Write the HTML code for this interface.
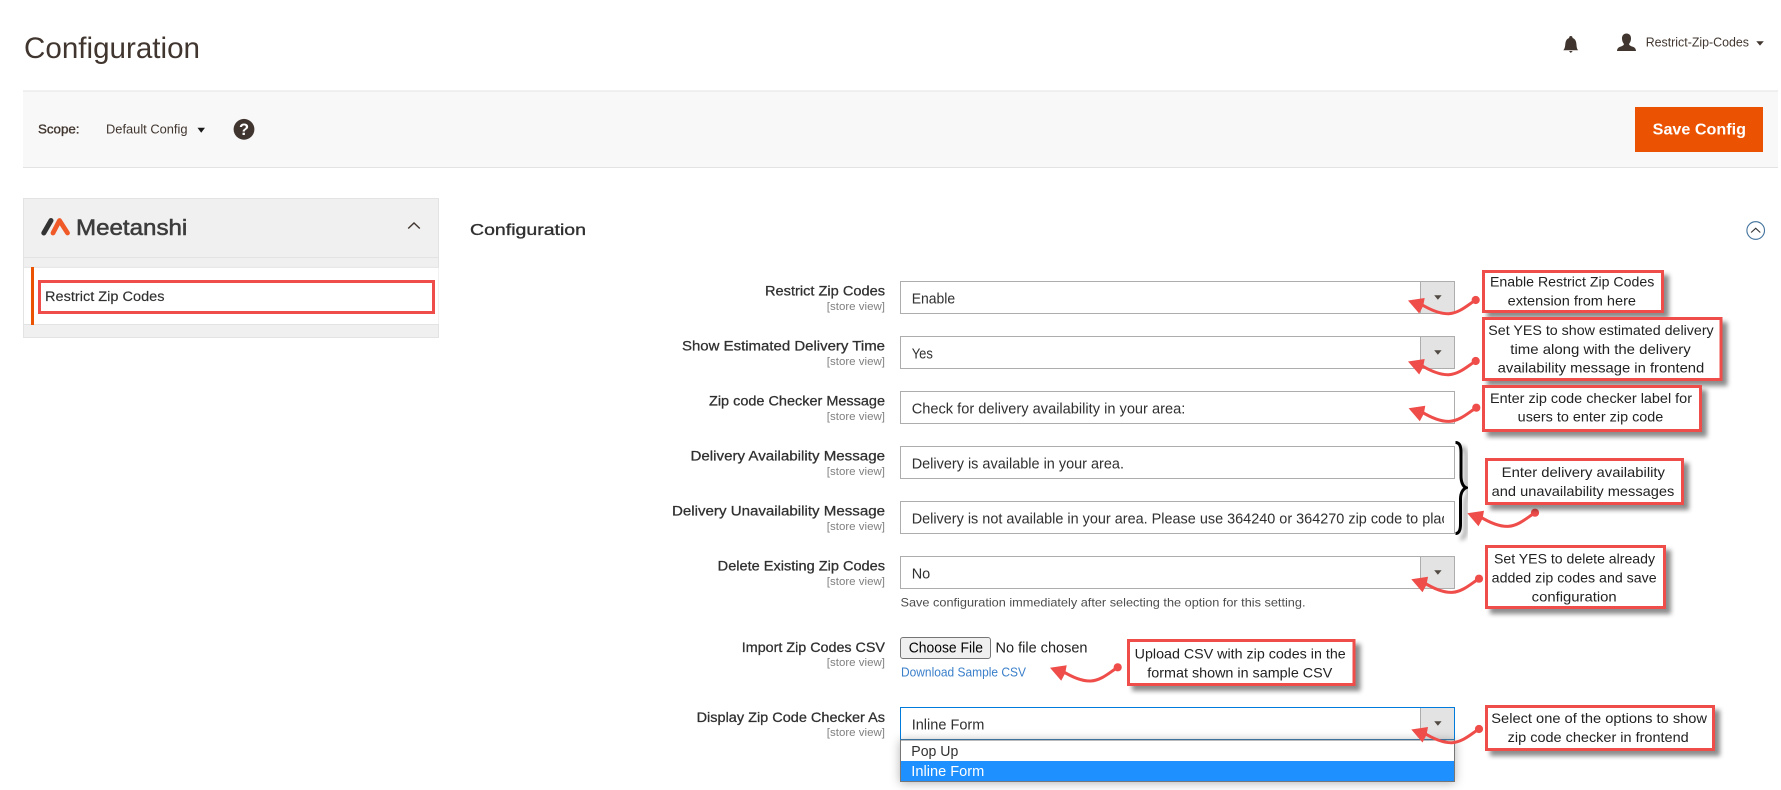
<!DOCTYPE html>
<html lang="en">
<head>
<meta charset="utf-8">
<title>Configuration</title>
<style>
html,body{margin:0;padding:0;background:#fff;width:1781px;height:790px;overflow:hidden}
svg{display:block}
text{font-family:"Liberation Sans",Arial,sans-serif;white-space:pre}
.lb{font-size:14.2px;fill:#303030;stroke:#303030;stroke-width:.28px}
.sv{font-size:10.6px;fill:#808080}
.in{font-size:14.6px;fill:#303030}
.fld{fill:#fff;stroke:#adadad;stroke-width:1}
.btn{fill:#e3e3e3;stroke:#adadad;stroke-width:1}
.tri{fill:#514943}
.co{fill:#fff;stroke:#ef4d4a;stroke-width:3}
.ct{font-size:14px;fill:#222}
.ar{fill:none;stroke:#ef4d4a;stroke-width:3;stroke-linecap:round}
</style>
</head>
<body>
<svg xmlns="http://www.w3.org/2000/svg" width="1781" height="790" viewBox="0 0 1781 790">
<defs>
<filter id="sh" x="-10%" y="-15%" width="125%" height="140%"><feDropShadow dx="5" dy="5" stdDeviation="2.5" flood-color="#000" flood-opacity=".45"/></filter>
<filter id="sd" x="-5%" y="-30%" width="110%" height="170%"><feDropShadow dx="0" dy="1" stdDeviation="5" flood-color="#000" flood-opacity=".3"/></filter>
<clipPath id="clip"><rect x="905" y="500" width="539" height="34"/></clipPath>
<g id="a">
<path class="ar" d="M-55,4 C-46,9.5 -36,14 -27,13.7 C-16,13 -8,5 0,0"/>
<path fill="#ef4d4a" d="M-67.7,0.5 L-51,-2 L-52.5,6 L-56.5,13.5 Z"/>
<circle cx="0" cy="0" r="4.1" fill="#ef4d4a"/>
</g>
</defs>

<!-- Page header -->
<text x="24" y="58" font-size="30" fill="#41362f" textLength="176" lengthAdjust="spacingAndGlyphs">Configuration</text>
<path fill="#41362f" d="M1570.8,36 C1569.6,36 1569.1,37 1569.1,38 C1566,39 1565.5,42 1565.2,45 C1565,48 1564,49.5 1563.3,50.3 L1578.3,50.3 C1577.3,49.5 1576.7,48 1576.5,45 C1576.3,42 1575.7,39 1572.6,38 C1572.6,37 1572.1,36 1570.8,36 Z M1569,51 L1572.7,51 L1570.8,53 Z"/>
<path fill="#41362f" d="M1626.5,33.5 C1623.2,33.5 1621.8,36 1622,39 C1622.2,41.5 1623.2,43 1624,44 C1623.7,45.5 1622.2,46 1620.2,46.8 C1618.2,47.6 1617.2,48.5 1617,51 L1636,51 C1635.8,48.5 1634.8,47.6 1632.8,46.8 C1630.8,46 1629.3,45.5 1629,44 C1629.8,43 1630.8,41.5 1631,39 C1631.2,36 1629.8,33.5 1626.5,33.5 Z"/>
<text x="1645.7" y="46.7" font-size="13.2" fill="#41362f" textLength="103.3" lengthAdjust="spacingAndGlyphs">Restrict-Zip-Codes</text>
<path fill="#41362f" d="M1756.3,41.2 H1763.8 L1760,45.6 Z"/>

<!-- Action bar -->
<rect x="23" y="91" width="1755" height="76.5" fill="#f8f8f8"/>
<rect x="23" y="90.5" width="1755" height="1" fill="#e3e3e3"/>
<rect x="23" y="167" width="1755" height="1" fill="#e3e3e3"/>
<text x="38" y="133.5" font-size="13.2" fill="#41362f" stroke="#41362f" stroke-width=".35" textLength="41.5" lengthAdjust="spacingAndGlyphs">Scope:</text>
<text x="106" y="133.5" font-size="13.2" fill="#41362f" textLength="81.5" lengthAdjust="spacingAndGlyphs">Default Config</text>
<path fill="#1a1a1a" d="M197.5,127.8 H205 L201.2,132.8 Z"/>
<circle cx="244" cy="129.3" r="10.4" fill="#41362f"/>
<text x="244" y="135.2" font-size="16.5" font-weight="700" fill="#fff" text-anchor="middle">?</text>
<rect x="1635" y="107" width="128" height="45" fill="#eb5202"/>
<text x="1652.7" y="134.4" font-size="16" font-weight="700" fill="#fff" textLength="93.3" lengthAdjust="spacingAndGlyphs">Save Config</text>

<!-- Sidebar -->
<rect x="23.5" y="198.5" width="415" height="139" fill="#f0f0f0" stroke="#e3e3e3"/>
<rect x="24" y="257" width="414" height="1" fill="#e3e3e3"/>
<rect x="24" y="267" width="414.5" height="58" fill="#fff"/>
<rect x="24" y="266.8" width="414.5" height="1" fill="#e3e3e3"/>
<rect x="24" y="324" width="414.5" height="1" fill="#e3e3e3"/>
<rect x="31" y="267" width="3" height="58" fill="#eb5202"/>
<path d="M43.8,233 L51,220.5" stroke="#333" stroke-width="5" stroke-linecap="round" fill="none"/>
<path d="M53,233 L59.5,220.5 L67.5,233" stroke="#f05a28" stroke-width="4.8" stroke-linecap="round" stroke-linejoin="round" fill="none"/>
<text x="76" y="235" font-size="22" fill="#3c3c3c" stroke="#3c3c3c" stroke-width=".55" textLength="111.3" lengthAdjust="spacingAndGlyphs">Meetanshi</text>
<path d="M408.2,228.5 L414,223 L419.8,228.5" fill="none" stroke="#41362f" stroke-width="1.4"/>
<rect x="39.5" y="281.5" width="394" height="31" fill="none" stroke="#ef4d4a" stroke-width="3"/>
<text x="45" y="301" font-size="14.2" fill="#303030" stroke="#303030" stroke-width=".15" textLength="119.5" lengthAdjust="spacingAndGlyphs">Restrict Zip Codes</text>

<!-- Section head -->
<text x="470" y="235" font-size="16" fill="#303030" stroke="#303030" stroke-width=".35" textLength="116" lengthAdjust="spacingAndGlyphs">Configuration</text>
<circle cx="1755.7" cy="230.5" r="8.8" fill="#fff" stroke="#41719c" stroke-width="1.1"/>
<path d="M1751.1,232.5 L1755.7,228.3 L1760.3,232.5" fill="none" stroke="#333" stroke-width="1.1"/>

<!-- Row 1 -->
<text class="lb" x="765" y="295.7" textLength="120" lengthAdjust="spacingAndGlyphs">Restrict Zip Codes</text>
<text class="sv" x="826.8" y="310" textLength="58.2" lengthAdjust="spacingAndGlyphs">[store view]</text>
<rect class="fld" x="900.5" y="281.5" width="554" height="32"/>
<rect class="btn" x="1420.5" y="281.5" width="34" height="32"/>
<path class="tri" d="M1434.2,295.3 H1441.6 L1437.9,299.7 Z"/>
<text class="in" x="911.7" y="303.3" textLength="43.5" lengthAdjust="spacingAndGlyphs">Enable</text>

<!-- Row 2 -->
<text class="lb" x="682" y="350.7" textLength="203" lengthAdjust="spacingAndGlyphs">Show Estimated Delivery Time</text>
<text class="sv" x="826.8" y="365" textLength="58.2" lengthAdjust="spacingAndGlyphs">[store view]</text>
<rect class="fld" x="900.5" y="336.5" width="554" height="32"/>
<rect class="btn" x="1420.5" y="336.5" width="34" height="32"/>
<path class="tri" d="M1434.2,350.3 H1441.6 L1437.9,354.7 Z"/>
<text class="in" x="911.7" y="358.3" textLength="21.2" lengthAdjust="spacingAndGlyphs">Yes</text>

<!-- Row 3 -->
<text class="lb" x="709" y="405.7" textLength="176" lengthAdjust="spacingAndGlyphs">Zip code Checker Message</text>
<text class="sv" x="826.8" y="420" textLength="58.2" lengthAdjust="spacingAndGlyphs">[store view]</text>
<rect class="fld" x="900.5" y="391.5" width="554" height="32"/>
<text class="in" x="911.7" y="413.3" textLength="273.6" lengthAdjust="spacingAndGlyphs">Check for delivery availability in your area:</text>

<!-- Row 4 -->
<text class="lb" x="690.5" y="460.7" textLength="194.5" lengthAdjust="spacingAndGlyphs">Delivery Availability Message</text>
<text class="sv" x="826.8" y="475" textLength="58.2" lengthAdjust="spacingAndGlyphs">[store view]</text>
<rect class="fld" x="900.5" y="446.5" width="554" height="32"/>
<text class="in" x="911.7" y="468.3" textLength="212.3" lengthAdjust="spacingAndGlyphs">Delivery is available in your area.</text>

<!-- Row 5 -->
<text class="lb" x="672" y="515.7" textLength="213" lengthAdjust="spacingAndGlyphs">Delivery Unavailability Message</text>
<text class="sv" x="826.8" y="530" textLength="58.2" lengthAdjust="spacingAndGlyphs">[store view]</text>
<rect class="fld" x="900.5" y="501.5" width="554" height="32"/>
<g clip-path="url(#clip)"><text class="in" x="911.7" y="523.3" textLength="537" lengthAdjust="spacingAndGlyphs">Delivery is not available in your area. Please use 364240 or 364270 zip code to plac</text></g>

<!-- Row 6 -->
<text class="lb" x="717.7" y="570.7" textLength="167.3" lengthAdjust="spacingAndGlyphs">Delete Existing Zip Codes</text>
<text class="sv" x="826.8" y="585" textLength="58.2" lengthAdjust="spacingAndGlyphs">[store view]</text>
<rect class="fld" x="900.5" y="556.5" width="554" height="32"/>
<rect class="btn" x="1420.5" y="556.5" width="34" height="32"/>
<path class="tri" d="M1434.2,570.3 H1441.6 L1437.9,574.7 Z"/>
<text class="in" x="911.7" y="578.3" textLength="18.5" lengthAdjust="spacingAndGlyphs">No</text>
<text x="900.5" y="606.7" font-size="11.8" fill="#4d4d4d" textLength="405" lengthAdjust="spacingAndGlyphs">Save configuration immediately after selecting the option for this setting.</text>

<!-- Row 7 -->
<text class="lb" x="741.8" y="652" textLength="143.2" lengthAdjust="spacingAndGlyphs">Import Zip Codes CSV</text>
<text class="sv" x="826.8" y="666" textLength="58.2" lengthAdjust="spacingAndGlyphs">[store view]</text>
<rect x="900.5" y="637.5" width="90" height="21" rx="2.5" fill="#efefef" stroke="#767676"/>
<text x="908.7" y="652.7" font-size="14.6" fill="#000" textLength="74.3" lengthAdjust="spacingAndGlyphs">Choose File</text>
<text x="995.5" y="652.7" font-size="14.6" fill="#222" textLength="92" lengthAdjust="spacingAndGlyphs">No file chosen</text>
<text x="901" y="676.7" font-size="12.6" fill="#3a7fca" textLength="125" lengthAdjust="spacingAndGlyphs">Download Sample CSV</text>

<!-- Row 8 -->
<text class="lb" x="696.6" y="722" textLength="188.4" lengthAdjust="spacingAndGlyphs">Display Zip Code Checker As</text>
<text class="sv" x="826.8" y="736" textLength="58.2" lengthAdjust="spacingAndGlyphs">[store view]</text>
<rect x="900.5" y="707.5" width="554" height="32" fill="#fff" stroke="#007bdb"/>
<rect x="1420.5" y="708" width="33.5" height="31" fill="#e3e3e3"/>
<rect x="1420" y="708" width="1" height="31" fill="#adadad"/>
<path class="tri" d="M1434.2,721.3 H1441.6 L1437.9,725.7 Z"/>
<text class="in" x="911.7" y="729.3" textLength="72.7" lengthAdjust="spacingAndGlyphs">Inline Form</text>
<rect x="900.5" y="740" width="554" height="41.5" fill="#fff" stroke="#767676" filter="url(#sd)"/>
<rect x="901" y="761" width="553" height="20" fill="#1e90ff"/>
<text class="in" x="911.3" y="756" textLength="47" lengthAdjust="spacingAndGlyphs">Pop Up</text>
<text x="911.3" y="776" font-size="14.6" fill="#fff" textLength="73" lengthAdjust="spacingAndGlyphs">Inline Form</text>

<!-- Brace -->
<path filter="url(#sh)" d="M1455.5,442.5 C1459.5,442.5 1461,446 1461,452 L1461,476 C1461,482 1463,486.5 1466,487.7 C1463,489 1460.5,493 1460.5,499 L1460.5,524 C1460.5,530 1459,533.5 1455.5,533.5" fill="none" stroke="#000" stroke-width="3"/>

<!-- Arrows -->
<use href="#a" x="1475.7" y="300"/>
<use href="#a" x="1475.7" y="361"/>
<use href="#a" x="1476.3" y="407.7"/>
<use href="#a" x="1535" y="512.7"/>
<use href="#a" x="1479" y="578.7"/>
<use href="#a" x="1117.7" y="667.3"/>
<use href="#a" x="1479" y="729"/>

<!-- Callouts -->
<rect class="co" filter="url(#sh)" x="1483.5" y="271.5" width="179" height="40"/>
<text class="ct" x="1490" y="286.7" textLength="164.3" lengthAdjust="spacingAndGlyphs">Enable Restrict Zip Codes</text>
<text class="ct" x="1507.7" y="305.7" textLength="128.3" lengthAdjust="spacingAndGlyphs">extension from here</text>

<rect class="co" filter="url(#sh)" x="1483.5" y="318.5" width="237.5" height="61"/>
<text class="ct" x="1488.3" y="335" textLength="225.4" lengthAdjust="spacingAndGlyphs">Set YES to show estimated delivery</text>
<text class="ct" x="1510.3" y="354" textLength="180.4" lengthAdjust="spacingAndGlyphs">time along with the delivery</text>
<text class="ct" x="1497.7" y="372.7" textLength="206.6" lengthAdjust="spacingAndGlyphs">availability message in frontend</text>

<rect class="co" filter="url(#sh)" x="1483.5" y="386.5" width="217" height="44"/>
<text class="ct" x="1490" y="403" textLength="202" lengthAdjust="spacingAndGlyphs">Enter zip code checker label for</text>
<text class="ct" x="1517.7" y="421.7" textLength="145.6" lengthAdjust="spacingAndGlyphs">users to enter zip code</text>

<rect class="co" filter="url(#sh)" x="1486.5" y="459.5" width="196" height="44"/>
<text class="ct" x="1501.7" y="477" textLength="163.3" lengthAdjust="spacingAndGlyphs">Enter delivery availability</text>
<text class="ct" x="1491.7" y="496" textLength="182.6" lengthAdjust="spacingAndGlyphs">and unavailability messages</text>

<rect class="co" filter="url(#sh)" x="1486.5" y="546.5" width="178" height="61"/>
<text class="ct" x="1494" y="563.3" textLength="161" lengthAdjust="spacingAndGlyphs">Set YES to delete already</text>
<text class="ct" x="1491.7" y="582.3" textLength="165" lengthAdjust="spacingAndGlyphs">added zip codes and save</text>
<text class="ct" x="1531.7" y="601.3" textLength="85" lengthAdjust="spacingAndGlyphs">configuration</text>

<rect class="co" filter="url(#sh)" x="1128.5" y="640.5" width="225.5" height="44"/>
<text class="ct" x="1134.7" y="658.3" textLength="211" lengthAdjust="spacingAndGlyphs">Upload CSV with zip codes in the</text>
<text class="ct" x="1147.3" y="677.3" textLength="185" lengthAdjust="spacingAndGlyphs">format shown in sample CSV</text>

<rect class="co" filter="url(#sh)" x="1486.5" y="706.5" width="227" height="43"/>
<text class="ct" x="1491.3" y="723" textLength="215.7" lengthAdjust="spacingAndGlyphs">Select one of the options to show</text>
<text class="ct" x="1507.7" y="742" textLength="181" lengthAdjust="spacingAndGlyphs">zip code checker in frontend</text>
</svg>
</body>
</html>
